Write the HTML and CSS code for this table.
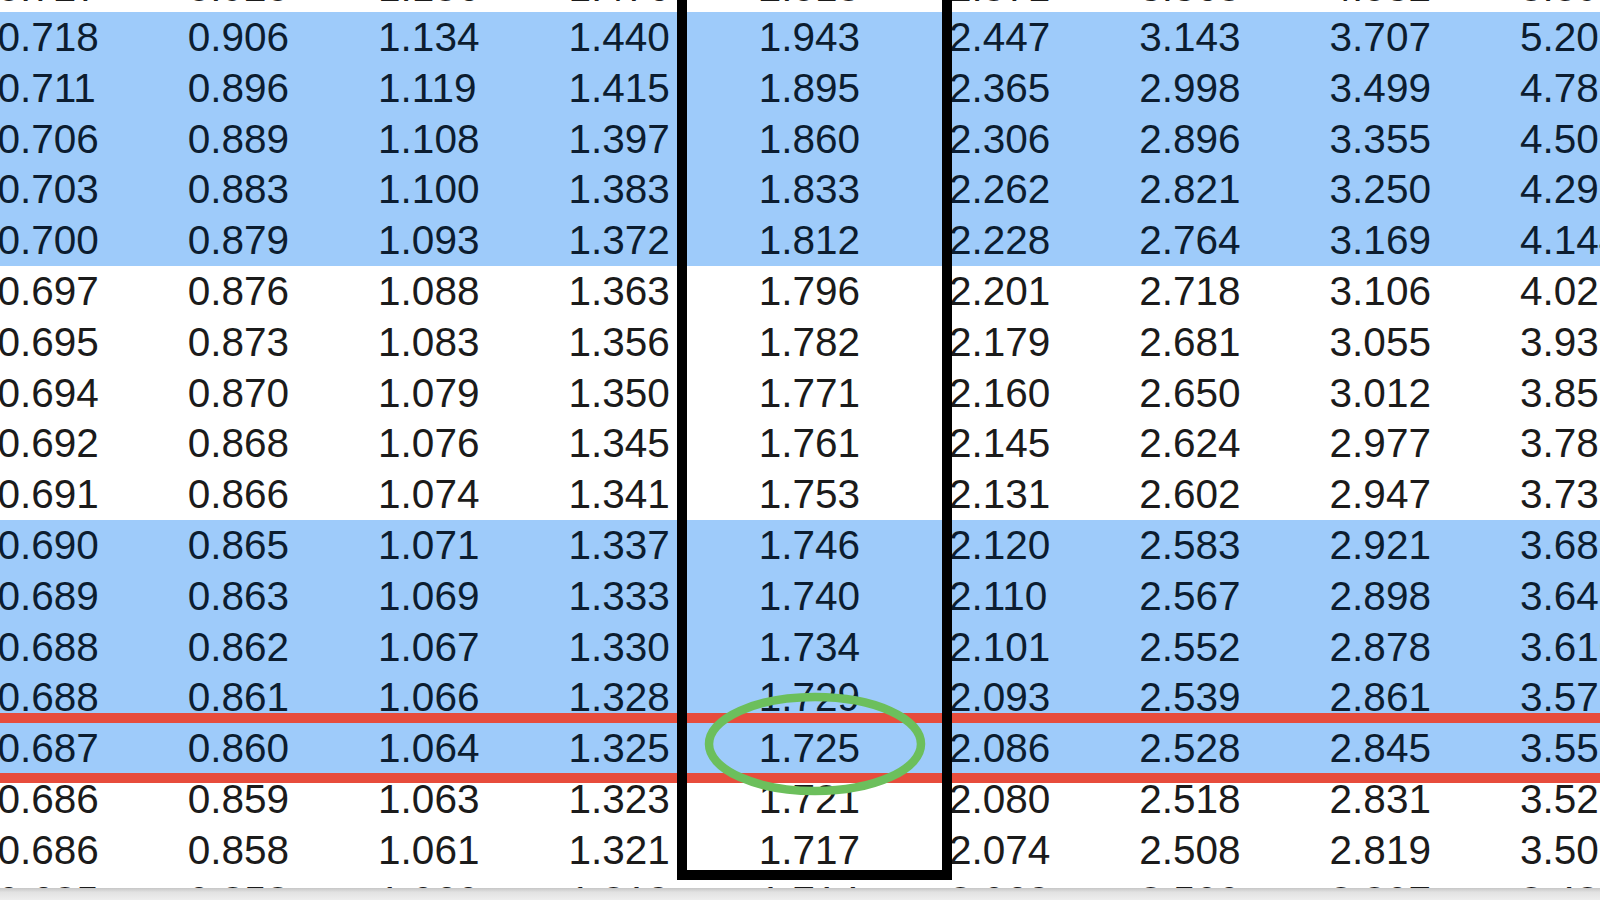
FILE: index.html
```html
<!DOCTYPE html>
<html lang="en">
<head>
<meta charset="utf-8">
<title>t-table</title>
<link rel="stylesheet" href="styles.css">
</head>
<body>
<div class="sheet">
  <div class="table">
    <div class="row first"><span>0.727</span><span>0.920</span><span>1.156</span><span>1.476</span><span>2.015</span><span>2.571</span><span>3.365</span><span>4.032</span><span>5.893</span></div>
    <div class="row hl"><span>0.718</span><span>0.906</span><span>1.134</span><span>1.440</span><span>1.943</span><span>2.447</span><span>3.143</span><span>3.707</span><span>5.208</span></div>
    <div class="row hl"><span>0.711</span><span>0.896</span><span>1.119</span><span>1.415</span><span>1.895</span><span>2.365</span><span>2.998</span><span>3.499</span><span>4.785</span></div>
    <div class="row hl"><span>0.706</span><span>0.889</span><span>1.108</span><span>1.397</span><span>1.860</span><span>2.306</span><span>2.896</span><span>3.355</span><span>4.501</span></div>
    <div class="row hl"><span>0.703</span><span>0.883</span><span>1.100</span><span>1.383</span><span>1.833</span><span>2.262</span><span>2.821</span><span>3.250</span><span>4.297</span></div>
    <div class="row hl"><span>0.700</span><span>0.879</span><span>1.093</span><span>1.372</span><span>1.812</span><span>2.228</span><span>2.764</span><span>3.169</span><span>4.144</span></div>
    <div class="row"><span>0.697</span><span>0.876</span><span>1.088</span><span>1.363</span><span>1.796</span><span>2.201</span><span>2.718</span><span>3.106</span><span>4.025</span></div>
    <div class="row"><span>0.695</span><span>0.873</span><span>1.083</span><span>1.356</span><span>1.782</span><span>2.179</span><span>2.681</span><span>3.055</span><span>3.930</span></div>
    <div class="row"><span>0.694</span><span>0.870</span><span>1.079</span><span>1.350</span><span>1.771</span><span>2.160</span><span>2.650</span><span>3.012</span><span>3.852</span></div>
    <div class="row"><span>0.692</span><span>0.868</span><span>1.076</span><span>1.345</span><span>1.761</span><span>2.145</span><span>2.624</span><span>2.977</span><span>3.787</span></div>
    <div class="row"><span>0.691</span><span>0.866</span><span>1.074</span><span>1.341</span><span>1.753</span><span>2.131</span><span>2.602</span><span>2.947</span><span>3.733</span></div>
    <div class="row hl"><span>0.690</span><span>0.865</span><span>1.071</span><span>1.337</span><span>1.746</span><span>2.120</span><span>2.583</span><span>2.921</span><span>3.686</span></div>
    <div class="row hl"><span>0.689</span><span>0.863</span><span>1.069</span><span>1.333</span><span>1.740</span><span>2.110</span><span>2.567</span><span>2.898</span><span>3.646</span></div>
    <div class="row hl"><span>0.688</span><span>0.862</span><span>1.067</span><span>1.330</span><span>1.734</span><span>2.101</span><span>2.552</span><span>2.878</span><span>3.610</span></div>
    <div class="row hl"><span>0.688</span><span>0.861</span><span>1.066</span><span>1.328</span><span>1.729</span><span>2.093</span><span>2.539</span><span>2.861</span><span>3.579</span></div>
    <div class="row hl"><span>0.687</span><span>0.860</span><span>1.064</span><span>1.325</span><span>1.725</span><span>2.086</span><span>2.528</span><span>2.845</span><span>3.552</span></div>
    <div class="row"><span>0.686</span><span>0.859</span><span>1.063</span><span>1.323</span><span>1.721</span><span>2.080</span><span>2.518</span><span>2.831</span><span>3.527</span></div>
    <div class="row"><span>0.686</span><span>0.858</span><span>1.061</span><span>1.321</span><span>1.717</span><span>2.074</span><span>2.508</span><span>2.819</span><span>3.505</span></div>
    <div class="row"><span>0.685</span><span>0.858</span><span>1.060</span><span>1.319</span><span>1.714</span><span>2.069</span><span>2.500</span><span>2.807</span><span>3.485</span></div>
  </div>
  <div class="redline red-top"></div>
  <div class="redline red-bottom"></div>
  <div class="colbox"></div>
  <svg class="ring" width="230" height="112" viewBox="0 0 230 112" aria-hidden="true">
    <ellipse cx="115" cy="56" rx="106" ry="47" fill="none" stroke="#6cbf5c" stroke-width="8.5"/>
  </svg>
</div>
<div class="edge"></div>
</body>
</html>
```

FILE: styles.css
```css
html, body {
  margin: 0;
  padding: 0;
  width: 1600px;
  height: 900px;
  overflow: hidden;
  background: #efefef;
}

.sheet {
  position: relative;
  height: 888px;
  overflow: hidden;
  background: #ffffff;
}

.table {
  margin-top: -35.6px;
  margin-left: -2.5px;
  font-family: "Liberation Sans", Arial, sans-serif;
  font-size: 40.5px;
  color: #1b1b1b;
}

.row {
  display: grid;
  grid-template-columns: repeat(9, 190.3px);
  height: 50.8px;
  line-height: 50.8px;
  white-space: nowrap;
}

.row.first {
  height: 47.6px;
  line-height: 47.6px;
  align-items: end;
}

.row.hl {
  background: #9ecbfa;
  color: #0c1d30;
}

.redline {
  position: absolute;
  left: 0;
  right: 0;
  height: 10px;
  background: #e74c3c;
}

.red-top { top: 713px; }
.red-bottom { top: 773px; }

.colbox {
  position: absolute;
  left: 677px;
  top: -20px;
  width: 275px;
  height: 900px;
  box-sizing: border-box;
  border: 10px solid #000000;
  border-top: none;
}

.ring {
  position: absolute;
  left: 700px;
  top: 688px;
}

.edge {
  height: 12px;
  background: linear-gradient(#c6c6c6, #e2e2e2 35%, #eeeeee);
}
```
